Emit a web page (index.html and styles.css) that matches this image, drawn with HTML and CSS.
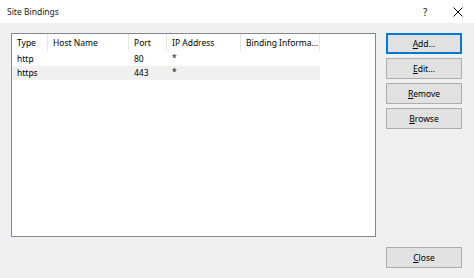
FILE: index.html
```html
<!DOCTYPE html>
<html lang="en">
<head>
    <meta charset="UTF-8">
    <title>Site Bindings</title>
    <link rel="stylesheet" href="styles.css">
</head>
<body>

<div class="dialog">
    <div class="titlebar">
        <span class="title">Site Bindings</span>
        <span class="help-btn">?</span>
        <span class="close-x">
            <svg width="10" height="10" viewBox="0 0 10 10"><path d="M0.5 0.5L9.5 9.5M9.5 0.5L0.5 9.5" stroke="#000" stroke-width="1"/></svg>
        </span>
    </div>

    <div class="content">
        <div class="top-row">
            <div class="listview">
                <div class="lv-row lv-header">
                    <div class="cell">Type</div>
                    <div class="cell">Host Name</div>
                    <div class="cell">Port</div>
                    <div class="cell">IP Address</div>
                    <div class="cell">Binding Informa...</div>
                </div>
                <div class="lv-row">
                    <div class="cell">http</div>
                    <div class="cell"></div>
                    <div class="cell">80</div>
                    <div class="cell star">*</div>
                    <div class="cell"></div>
                </div>
                <div class="lv-row selected">
                    <div class="cell">https</div>
                    <div class="cell"></div>
                    <div class="cell">443</div>
                    <div class="cell star">*</div>
                    <div class="cell"></div>
                </div>
            </div>

            <div class="side-buttons">
                <button class="btn default"><u>A</u>dd...</button>
                <button class="btn"><u>E</u>dit...</button>
                <button class="btn"><u>R</u>emove</button>
                <button class="btn"><u>B</u>rowse</button>
            </div>
        </div>

        <div class="footer">
            <button class="btn"><u>C</u>lose</button>
        </div>
    </div>
</div>

</body>
</html>
```

FILE: styles.css
```css
body {
    margin: 0;
    font-family: 'Noto Sans', 'Open Sans', sans-serif;
    font-size: 8.5px;
    color: #000;
    background-color: #f0f0f0;
    overflow: hidden;
}

.dialog {
    width: 474px;
    height: 278px;
    display: flex;
    flex-direction: column;
}

.titlebar {
    height: 23px;
    background-color: #fff;
    display: flex;
    align-items: center;
    padding-left: 7px;
    color: #1a1a1a;
}

.title {
    flex: 1;
}

.help-btn {
    width: 6px;
    margin-right: 24px;
    font-size: 10px;
}

.close-x {
    width: 10px;
    height: 10px;
    margin-right: 11px;
    display: flex;
}

.content {
    flex: 1;
    display: flex;
    flex-direction: column;
    padding: 10px 12px 10px 11px;
}

.top-row {
    display: flex;
}

.listview {
    width: 363px;
    height: 202px;
    border: 1px solid #828790;
    background-color: #fff;
}

.lv-row {
    display: grid;
    grid-template-columns: 36px 81px 38px 74px 79px;
    height: 14px;
    line-height: 14px;
}

.lv-header {
    height: 17px;
    line-height: 17px;
    margin-bottom: 1px;
}

.lv-header .cell {
    border-right: 1px solid #e5e5e5;
}

.cell {
    padding-left: 5px;
    white-space: nowrap;
    overflow: visible;
}

.lv-row.selected {
    width: 308px;
    background-color: #f0f0f0;
}

.star {
    line-height: 11px;
}

.side-buttons {
    display: flex;
    flex-direction: column;
    gap: 4px;
    margin-left: 10px;
}

.btn {
    width: 76px;
    height: 21px;
    padding: 0;
    font-family: inherit;
    font-size: 8.5px;
    color: #000;
    background-color: #e1e1e1;
    border: 1px solid #adadad;
}

.btn.default {
    border-color: #0078d7;
    box-shadow: inset 0 0 0 1px #0078d7;
}

.footer {
    margin-top: auto;
    display: flex;
    justify-content: flex-end;
}
```
